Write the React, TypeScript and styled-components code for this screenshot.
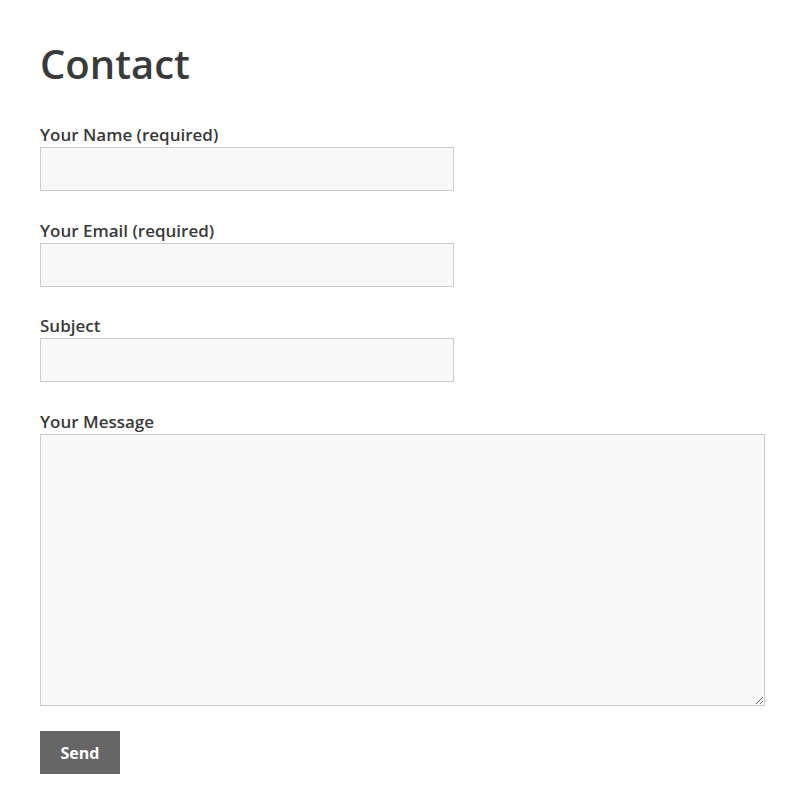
import React from "react";
import styled, { createGlobalStyle } from "styled-components";

const Global = createGlobalStyle`
  html, body { margin: 0; padding: 0; background: #fff; }
  body { font-family: "Open Sans", "Noto Sans", sans-serif; color: #3a3a3a; }
  * { box-sizing: border-box; }
`;

const Page = styled.div`
  padding: 34px 38px 30px 40px;
  width: 803px;
`;

const Title = styled.h1`
  margin: 0 0 29px;
  font-size: 40px;
  font-weight: 600;
  line-height: 60px;
  color: #3a3a3a;
`;

const Form = styled.form`
  display: flex;
  flex-direction: column;
  gap: 27.6px;
`;

const Field = styled.div`
  display: flex;
  flex-direction: column;
`;

const Label = styled.label`
  font-size: 17px;
  font-weight: 600;
  line-height: 24px;
  color: #3a3a3a;
`;

const Input = styled.input`
  width: 414px;
  height: 44px;
  border: 1px solid #cccccc;
  background: #f9f9f9;
  font-family: inherit;
  font-size: 15px;
  padding: 0 10px;
  outline: none;
`;

const TextArea = styled.textarea`
  width: 725px;
  height: 272px;
  border: 1px solid #cccccc;
  background: #f9f9f9;
  font-family: inherit;
  font-size: 15px;
  padding: 10px;
  outline: none;
  resize: both;
  display: block;
`;

const Button = styled.button`
  align-self: flex-start;
  margin-top: -2px;
  width: 80px;
  height: 43px;
  border: none;
  background: #666666;
  color: #ffffff;
  font-family: inherit;
  font-size: 16px;
  font-weight: 700;
  cursor: pointer;
`;

export default function App() {
  return (
    <Page>
      <Global />
      <Title>Contact</Title>
      <Form onSubmit={(e) => e.preventDefault()}>
        <Field>
          <Label htmlFor="name">Your Name (required)</Label>
          <Input id="name" type="text" />
        </Field>
        <Field>
          <Label htmlFor="email">Your Email (required)</Label>
          <Input id="email" type="email" />
        </Field>
        <Field>
          <Label htmlFor="subject">Subject</Label>
          <Input id="subject" type="text" />
        </Field>
        <Field>
          <Label htmlFor="message">Your Message</Label>
          <TextArea id="message" />
        </Field>
        <Button type="submit">Send</Button>
      </Form>
    </Page>
  );
}
